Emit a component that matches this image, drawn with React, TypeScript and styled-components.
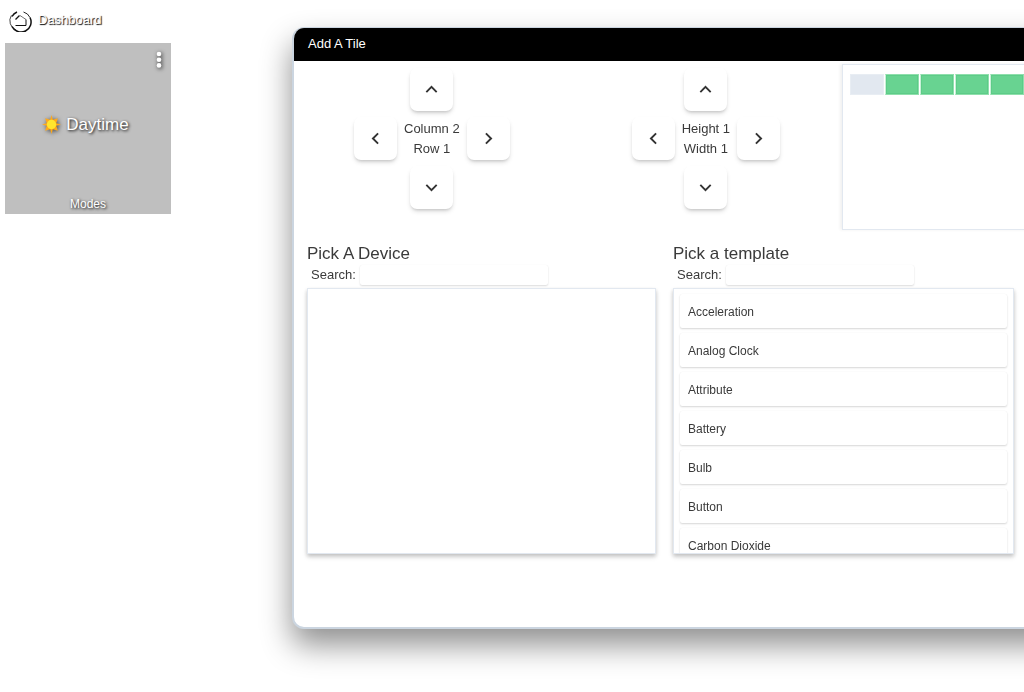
import React from "react";
import styled, { createGlobalStyle } from "styled-components";

const GlobalStyle = createGlobalStyle`
  *, *::before, *::after { box-sizing: border-box; }
  body {
    margin: 0;
    overflow: hidden;
    background: #fff;
    color: #3a3a3a;
    font: 13px/20px "Liberation Sans", Arial, sans-serif;
  }
  h1, h2, p, ul { margin: 0; padding: 0; font-weight: 400; }
  button, input { font: inherit; color: inherit; }
`;

const Page = styled.main`
  min-height: 100vh;
  padding: 8px 5px;
`;

const Header = styled.header`
  display: flex;
  align-items: center;
  gap: 6px;
  height: 24px;
  padding-left: 3px;
  margin-bottom: 11px;
  color: #fff;
`;

const Title = styled.h1`
  font-size: 13px;
  line-height: 20px;
  text-shadow: 1px 1px 1px #000;
`;

const LogoSvg = styled.svg`
  width: 24px;
  height: 24px;
`;

const Tile = styled.section`
  display: grid;
  grid-template-rows: 20px 1fr 20px;
  width: 166px;
  height: 171px;
  padding: 6px 4px 0;
  background: #bfbfbf;
  color: #fff;
  text-align: center;
  text-shadow: 1px 1px 3px #000;
`;

const MenuButton = styled.button`
  justify-self: end;
  width: 16px;
  height: 20px;
  padding: 0;
  border: 0;
  background: none;
  svg { display: block; filter: drop-shadow(1px 1px 2px rgba(0, 0, 0, 0.8)); }
`;

const TileValue = styled.div`
  display: flex;
  align-items: center;
  justify-content: center;
  gap: 5px;
  padding: 0 5px 14px 0;
  font-size: 17px;
  line-height: 24px;
  svg { filter: drop-shadow(1px 1px 2px rgba(0, 0, 0, 0.6)); }
`;

const TileName = styled.h2`
  font-size: 12px;
  line-height: 20px;
`;

const Dialog = styled.section`
  position: fixed;
  top: 27px;
  left: 292px;
  right: -120px;
  height: 602px;
  border: 2px solid #cbd5e0;
  border-top-width: 1px;
  border-radius: 12px;
  overflow: hidden;
  background: #fff;
  box-shadow: 0 16px 31px rgba(0, 0, 0, 0.44);
`;

const DialogTitle = styled.h2`
  padding: 6px 14px 7px;
  background: #000;
  color: #fff;
  font-size: 13px;
  line-height: 20px;
`;

const Controls = styled.div`
  display: flex;
  gap: 62px;
  height: 176px;
  padding: 3px 0 7px 60px;
`;

const PadBox = styled.div`
  display: grid;
  grid-template-columns: 43px auto 43px;
  grid-template-rows: repeat(3, 43px);
  gap: 6px 7px;
  align-content: start;
  justify-items: center;
  padding-top: 4px;
  &:first-child { margin-right: 60px; }
`;

const PadButton = styled.button<{ $row: number; $col: number }>`
  grid-row: ${(p) => p.$row};
  grid-column: ${(p) => p.$col};
  display: grid;
  place-items: center;
  width: 43px;
  height: 43px;
  padding: 0;
  border: 0;
  border-radius: 7px;
  background: #fff;
  box-shadow: 0 3px 5px -1px rgba(0, 0, 0, 0.16), 0 2px 3px -1px rgba(0, 0, 0, 0.12);
`;

const PadText = styled.p`
  grid-row: 2;
  grid-column: 2;
  align-self: center;
  text-align: center;
  white-space: nowrap;
`;

const Preview = styled.div`
  flex: 1;
  display: grid;
  grid-template-columns: repeat(auto-fill, 34px);
  grid-auto-rows: 21px;
  gap: 1px;
  padding: 9px 7px;
  border: 1px solid #e2e8f0;
  box-shadow: -2px 0 3px rgba(0, 0, 0, 0.06);
`;

const Cell = styled.span<{ $used?: boolean }>`
  background: ${(p) => (p.$used ? "#e2e8f0" : "#68d391")};
  border: 1px solid ${(p) => (p.$used ? "#e8edf3" : "#8fdfac")};
  border-left-color: ${(p) => (p.$used ? "#e8edf3" : "#c9f0d7")};
  box-shadow: inset 0 0 0 1px ${(p) => (p.$used ? "#e2e8f0" : "#5dcc88")};
`;

const Pickers = styled.div`
  display: grid;
  grid-template-columns: 349fr 341fr;
  gap: 17px;
  padding: 6px 128px 0 13px;
`;

const PickerTitle = styled.h2`
  font-size: 17px;
  line-height: 21px;
`;

const SearchRow = styled.label`
  display: flex;
  align-items: center;
  gap: 4px;
  height: 22px;
  padding-left: 4px;
`;

const SearchInput = styled.input`
  width: 188px;
  height: 20px;
  padding: 0 4px;
  border: 0;
  border-radius: 2px;
  background: #fff;
  box-shadow: 0 1px 2px rgba(0, 0, 0, 0.14), 0 0 1px rgba(0, 0, 0, 0.08);
`;

const List = styled.ul`
  height: 266px;
  margin-top: 2px;
  padding: 5px 6px;
  overflow: hidden;
  border: 1px solid #e2e8f0;
  list-style: none;
  box-shadow: 0 3px 5px rgba(0, 0, 0, 0.14), 0 2px 4px rgba(0, 0, 0, 0.14);
`;

const ListItem = styled.li`
  margin-bottom: 5px;
`;

const ItemButton = styled.button`
  display: block;
  width: 100%;
  height: 34px;
  padding: 2px 8px 0;
  border: 0;
  border-radius: 2px;
  background: #fff;
  font-size: 12px;
  text-align: left;
  box-shadow: 0 1px 2px rgba(0, 0, 0, 0.16), 0 0 1px rgba(0, 0, 0, 0.08);
`;

const Logo = () => (
  <LogoSvg viewBox="0 0 24 24" fill="none" stroke="#111" aria-hidden="true">
    <path d="M3.4 7.4A10 10 0 0 0 8 22" strokeWidth="0.8" />
    <path d="M4 18.5A10 10 0 0 0 22 9.5" strokeWidth="1.5" />
    <path d="M22 9.5A10 10 0 0 0 15.5 4" strokeWidth="0.9" />
    <path d="M4 8.5A9.5 9.5 0 0 1 9 4" strokeWidth="1.5" />
    <path d="M7.5 11.5 11.5 7.5" strokeWidth="1.3" />
    <path d="M12 7.5l6 4" strokeWidth="0.6" />
    <path d="M18 11.5v6H7.5" strokeWidth="1" />
  </LogoSvg>
);

const Sun = () => (
  <svg width="19" height="19" viewBox="0 0 20 20" aria-hidden="true">
    <path
      fill="#ffa91a"
      d="M10 0l1.4 5L16.7 3.3 15 8.6 20 10l-5 1.4 1.7 5.3-5.3-1.7L10 20l-1.4-5-5.3 1.7L5 11.4 0 10l5-1.4L3.3 3.3 8.6 5z"
    />
    <circle cx="10" cy="10" r="4.9" fill="#ffe62e" />
  </svg>
);

const chevrons = {
  up: "M5 14l6-6 6 6",
  left: "M14 5l-6 6 6 6",
  right: "M8 5l6 6-6 6",
  down: "M5 8l6 6 6-6",
};

const Chevron = ({ dir }: { dir: keyof typeof chevrons }) => (
  <svg width="19" height="19" viewBox="0 0 22 22" fill="none" stroke="#333" strokeWidth="2.2" aria-hidden="true">
    <path d={chevrons[dir]} />
  </svg>
);

const Pad = ({ lines, labels }: { lines: [string, string]; labels: string[] }) => (
  <PadBox>
    <PadButton $row={1} $col={2} aria-label={labels[0]}><Chevron dir="up" /></PadButton>
    <PadButton $row={2} $col={1} aria-label={labels[1]}><Chevron dir="left" /></PadButton>
    <PadText>{lines[0]}<br />{lines[1]}</PadText>
    <PadButton $row={2} $col={3} aria-label={labels[2]}><Chevron dir="right" /></PadButton>
    <PadButton $row={3} $col={2} aria-label={labels[3]}><Chevron dir="down" /></PadButton>
  </PadBox>
);

const Picker = ({ title, items }: { title: string; items: string[] }) => (
  <section>
    <PickerTitle>{title}</PickerTitle>
    <SearchRow>Search:<SearchInput type="text" /></SearchRow>
    <List>
      {items.map((item) => (
        <ListItem key={item}><ItemButton>{item}</ItemButton></ListItem>
      ))}
    </List>
  </section>
);

const templates = ["Acceleration", "Analog Clock", "Attribute", "Battery", "Bulb", "Button", "Carbon Dioxide"];

export default function App() {
  return (
    <>
      <GlobalStyle />
      <Page>
        <Header><Logo /><Title>Dashboard</Title></Header>
        <Tile>
          <MenuButton aria-label="Tile menu">
            <svg width="16" height="20" viewBox="0 0 16 20" fill="#fff">
              <circle cx="8" cy="5" r="2.3" />
              <circle cx="8" cy="10.7" r="2.3" />
              <circle cx="8" cy="16.4" r="2.3" />
            </svg>
          </MenuButton>
          <TileValue><Sun />Daytime</TileValue>
          <TileName>Modes</TileName>
        </Tile>
      </Page>
      <Dialog role="dialog" aria-label="Add A Tile">
        <DialogTitle>Add A Tile</DialogTitle>
        <Controls>
          <Pad lines={["Column 2", "Row 1"]} labels={["Row up", "Column left", "Column right", "Row down"]} />
          <Pad lines={["Height 1", "Width 1"]} labels={["Shorter", "Narrower", "Wider", "Taller"]} />
          <Preview>
            <Cell $used /><Cell /><Cell /><Cell /><Cell />
          </Preview>
        </Controls>
        <Pickers>
          <Picker title="Pick A Device" items={[]} />
          <Picker title="Pick a template" items={templates} />
        </Pickers>
      </Dialog>
    </>
  );
}
